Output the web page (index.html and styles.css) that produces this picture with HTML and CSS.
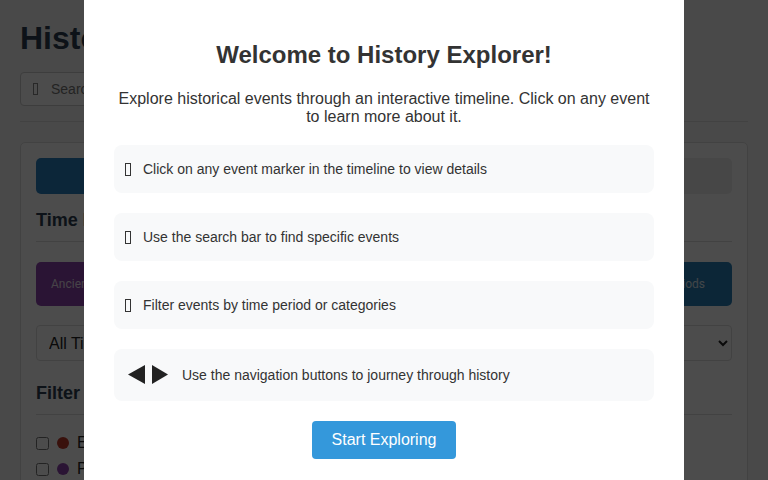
FILE: index.html
```html
<!DOCTYPE html>
<html lang="en">
<head>
<meta charset="utf-8">
<title>History Explorer</title>
<link rel="stylesheet" href="styles.css">
</head>
<body>
<div class="page">
  <header class="header">
    <h1 class="title">History Explorer</h1>
    <div class="search">
      <span class="tofu tofu-small"></span>
      <span class="search-placeholder">Search events...</span>
    </div>
  </header>

  <section class="panel">
    <div class="tabs">
      <button class="tab tab-active">Timeline</button>
      <button class="tab">Map View</button>
    </div>

    <h3 class="section-title section-periods">Time Periods</h3>
    <div class="periods">
      <button class="period period-ancient">Ancient History</button>
      <button class="period period-classical">Classical</button>
      <button class="period period-medieval">Medieval</button>
      <button class="period period-modern">Modern</button>
      <button class="period period-all">All Periods</button>
    </div>
    <select class="select">
      <option>All Time Periods</option>
    </select>

    <h3 class="section-title section-filter">Filter by Category</h3>
    <ul class="filters">
      <li class="filter"><input type="checkbox" class="check"><span class="dot dot-red"></span><span>Events</span></li>
      <li class="filter"><input type="checkbox" class="check"><span class="dot dot-purple"></span><span>People</span></li>
    </ul>
  </section>
</div>

<div class="overlay">
  <div class="modal">
    <h2 class="modal-title">Welcome to History Explorer!</h2>
    <p class="modal-text">Explore historical events through an interactive timeline. Click on any event to learn more about it.</p>
    <div class="tips">
      <div class="tip"><span class="tofu"></span><span>Click on any event marker in the timeline to view details</span></div>
      <div class="tip"><span class="tofu"></span><span>Use the search bar to find specific events</span></div>
      <div class="tip"><span class="tofu"></span><span>Filter events by time period or categories</span></div>
      <div class="tip tip-nav">
        <svg class="nav-icon" width="48" height="22" viewBox="0 0 48 22" aria-hidden="true">
          <polygon points="4,10.5 21,1 21,20" fill="#222"/>
          <polygon points="28,1 44,10.5 28,20" fill="#222"/>
        </svg>
        <span>Use the navigation buttons to journey through history</span>
      </div>
    </div>
    <button class="start-btn">Start Exploring</button>
  </div>
</div>
</body>
</html>
```

FILE: styles.css
```css
* { box-sizing: border-box; }

html, body {
  margin: 0;
  padding: 0;
  height: 100%;
  overflow: hidden;
}

body {
  background: #f5f5f5;
  font-family: "Liberation Sans", Arial, sans-serif;
  color: #2c3e50;
}

.page {
  padding: 20px;
}

.header {
  padding-bottom: 15px;
  border-bottom: 1px solid #ddd;
  margin-bottom: 20px;
}

.title {
  margin: 0 0 15px;
  font-size: 32px;
  font-weight: bold;
  line-height: normal;
  color: #2c3e50;
}

.search {
  width: 300px;
  height: 34px;
  border: 1px solid #ccc;
  border-radius: 4px;
  background: #fff;
  display: flex;
  align-items: center;
  padding-left: 11px;
  font-size: 14px;
  color: #777;
}

.tofu {
  display: inline-block;
  width: 6px;
  height: 13px;
  border: 1px solid #333;
  margin-left: 1px;
  margin-right: 12px;
  flex: none;
}

.tofu-small {
  border-color: #888;
  width: 5px;
  height: 12px;
  margin-right: 13px;
}

.panel {
  background: #fff;
  border: 1px solid #ddd;
  border-radius: 5px;
  padding: 15px;
  height: 400px;
}

.tabs {
  display: flex;
  gap: 10px;
}

.tab {
  flex: 1;
  height: 36px;
  border: none;
  border-radius: 5px;
  background: #eee;
  color: #333;
  font-family: inherit;
  font-size: 14px;
}

.tab-active {
  background: #2a7fc0;
  color: #fff;
}

.section-title {
  padding-bottom: 10px;
  border-bottom: 1px solid #ddd;
  font-size: 18px;
  font-weight: bold;
  line-height: normal;
  color: #2c3e50;
}

.section-periods { margin: 16px 0 20px; }
.section-filter { margin: 22px 0 15px; }

.periods {
  display: flex;
  gap: 10px;
  margin-bottom: 19px;
}

.period {
  flex: 1;
  height: 44px;
  border: none;
  border-radius: 5px;
  color: rgba(255, 255, 255, 0.85);
  font-family: "Roboto", "Liberation Sans", sans-serif;
  font-size: 12px;
  text-align: left;
  padding: 0 15px;
}

.period-ancient { background: #8e44ad; }
.period-classical { background: #c0392b; }
.period-medieval { background: #27ae60; }
.period-modern { background: #e67e22; }
.period-all { background: #2980b9; text-align: right; padding-right: 27px; }

.select {
  display: block;
  width: 100%;
  height: 36px;
  border: 1px solid #ddd;
  border-radius: 4px;
  background: #fff;
  padding: 0 8px;
  font-family: "Liberation Sans", Arial, sans-serif;
  font-size: 16px;
  color: #222;
}

.filters {
  list-style: none;
  margin: 0;
  padding: 0;
}

.filter {
  display: flex;
  align-items: center;
  height: 26px;
  font-size: 16px;
  color: #222;
}

.check {
  width: 13px;
  height: 13px;
  margin: 0 8px 0 0;
}

.dot {
  width: 12px;
  height: 12px;
  border-radius: 50%;
  margin-right: 8px;
}

.dot-red { background: #c0392b; }
.dot-purple { background: #8e44ad; }

.overlay {
  position: fixed;
  inset: 0;
  background: rgba(0, 0, 0, 0.7);
  display: flex;
  justify-content: center;
  align-items: flex-start;
}

.modal {
  width: 600px;
  background: #fff;
  padding: 41px 30px 30px;
  text-align: center;
  color: #333;
}

.modal-title {
  margin: 0 0 21px;
  font-size: 24px;
  line-height: 28px;
  font-weight: bold;
  color: #333;
}

.modal-text {
  margin: 0 0 19px;
  font-size: 16px;
  line-height: 18px;
  color: #333;
}

.tips {
  display: flex;
  flex-direction: column;
  gap: 20px;
  margin-bottom: 20px;
}

.tip {
  display: flex;
  align-items: center;
  background: #f8f9fa;
  border-radius: 8px;
  padding: 15px 10px;
  font-size: 14px;
  line-height: 18px;
  text-align: left;
  color: #333;
}

.nav-icon {
  display: block;
  flex: none;
  margin-right: 10px;
}

.start-btn {
  background: #3498db;
  color: #fff;
  border: none;
  border-radius: 4px;
  padding: 10px 20px;
  font-family: "Liberation Sans", Arial, sans-serif;
  font-size: 16px;
  line-height: 18px;
}
```
